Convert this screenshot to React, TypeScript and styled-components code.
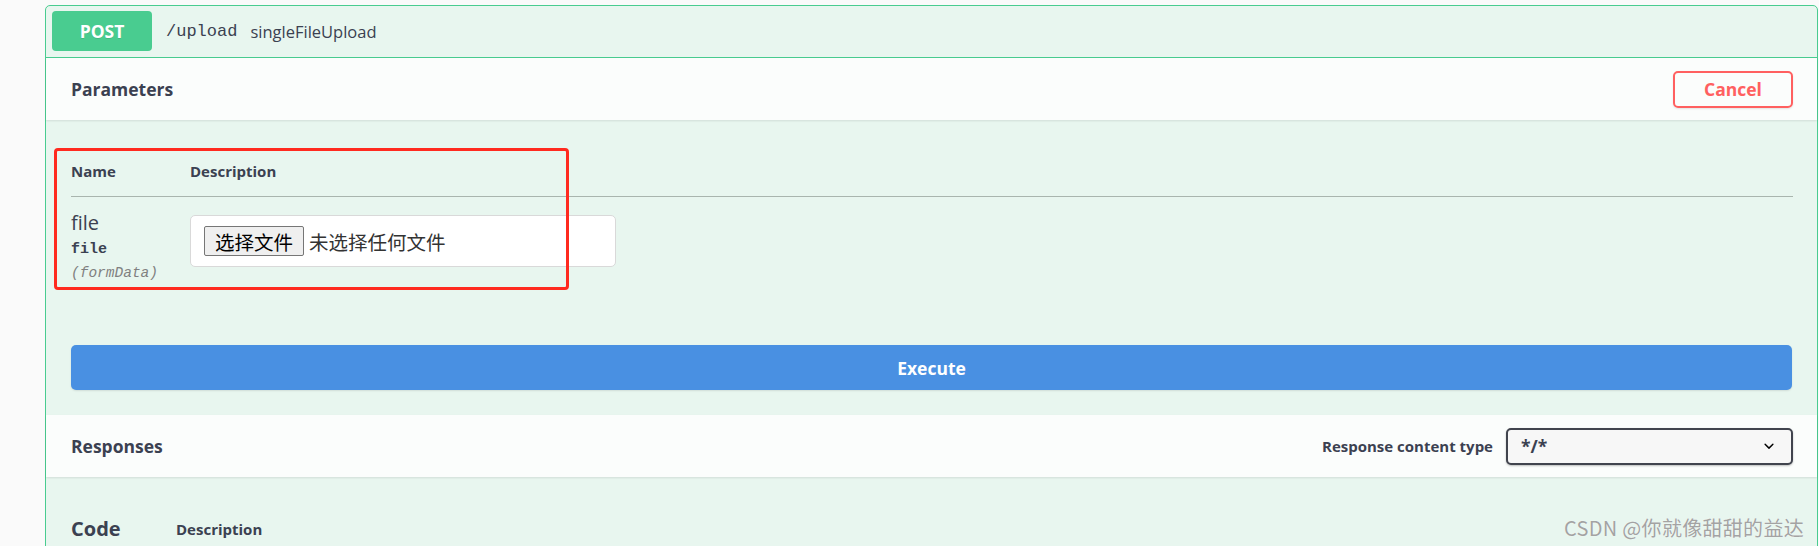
import React from "react";
import styled, { createGlobalStyle } from "styled-components";

const GlobalStyle = createGlobalStyle`
  html, body { margin: 0; padding: 0; }
  body {
    background: #fafafa;
    font-family: "Open Sans", "Noto Sans CJK SC", sans-serif;
    color: #3b4151;
    overflow: hidden;
  }
`;

const Page = styled.div`
  padding: 5px 1px 0 45px;
  height: 541px;
  overflow: hidden;
  position: relative;
`;

const OpBlock = styled.div`
  border: 1px solid #49cc90;
  border-radius: 5px;
  background: #e8f6ef;
  min-height: 700px;
`;

const Summary = styled.div`
  display: flex;
  align-items: center;
  padding: 5px 6px 6px 6px;
  border-bottom: 1px solid #49cc90;
`;

const Method = styled.span`
  width: 100px;
  height: 40px;
  display: flex;
  align-items: center;
  justify-content: center;
  background: #49cc90;
  color: #fff;
  border-radius: 4px;
  font-size: 17.5px;
  font-weight: 700;
  text-shadow: 0 1px 0 rgba(0, 0, 0, 0.1);
`;

const Path = styled.span`
  font-family: "Liberation Mono", monospace;
  font-size: 17px;
  color: #3b4151;
  margin-left: 14px;
`;

const OpDesc = styled.span`
  font-size: 16.5px;
  color: #3b4151;
  margin-left: 13px;
`;

const SectionHeader = styled.div`
  display: flex;
  align-items: center;
  justify-content: space-between;
  min-height: 62px;
  box-sizing: border-box;
  padding: 0 24px 0 25px;
  background: rgba(255, 255, 255, 0.8);
  box-shadow: 0 1px 2px rgba(0, 0, 0, 0.1);
`;

const SectionTitle = styled.h4`
  margin: 0;
  font-size: 17.5px;
  font-weight: 700;
  color: #3b4151;
`;

const CancelButton = styled.button`
  width: 120px;
  height: 37px;
  background: transparent;
  border: 2px solid #ff6060;
  border-radius: 5px;
  color: #ff6060;
  font-family: "Open Sans", sans-serif;
  font-size: 17.5px;
  font-weight: 700;
  padding: 0;
  box-shadow: 0 1px 2px rgba(0, 0, 0, 0.1);
`;

const Body = styled.div`
  position: relative;
  padding: 27px 24px 0 25px;
`;

const HeadRow = styled.div`
  display: grid;
  grid-template-columns: 119px 1fr;
  padding: 14px 0 15px;
  border-bottom: 1px solid #a9b5ae;
`;

const HeadCell = styled.span<{ $large?: boolean }>`
  font-size: ${(p) => (p.$large ? "20px" : "15px")};
  line-height: 20px;
  font-weight: 700;
  color: #3b4151;
`;

const ParamRow = styled.div`
  display: grid;
  grid-template-columns: 119px 1fr;
  padding: 18px 0 8px;
`;

const NameCol = styled.div`
  display: flex;
  flex-direction: column;
`;

const ParamName = styled.div`
  font-size: 20px;
  line-height: 24px;
  margin-top: -4px;
  color: #3b4151;
`;

const ParamType = styled.div`
  font-family: "Liberation Mono", monospace;
  font-size: 15px;
  font-weight: 700;
  line-height: 20px;
  padding: 5px 0 3px;
  color: #3b4151;
`;

const ParamIn = styled.div`
  font-family: "Liberation Mono", monospace;
  font-size: 14.5px;
  font-style: italic;
  line-height: 20px;
  color: #808080;
`;

const FileBox = styled.div`
  width: 426px;
  height: 52px;
  box-sizing: border-box;
  background: #fff;
  border: 1px solid #d9d9d9;
  border-radius: 5px;
  display: flex;
  align-items: center;
  padding: 0 13px;
`;

const FileButton = styled.span`
  height: 30px;
  width: 100px;
  box-sizing: border-box;
  display: flex;
  align-items: center;
  justify-content: center;
  background: #efefef;
  border: 1px solid #767676;
  border-radius: 2px;
  font-family: "Noto Sans CJK SC", sans-serif;
  font-size: 19.5px;
  color: #000;
`;

const FileText = styled.span`
  margin-left: 5px;
  font-family: "Noto Sans CJK SC", sans-serif;
  font-size: 19.5px;
  color: #333;
`;

const Highlight = styled.div`
  position: absolute;
  left: 8px;
  top: 28px;
  width: 515px;
  height: 142px;
  box-sizing: border-box;
  border: 3px solid #ff2a1f;
  border-radius: 4px;
  pointer-events: none;
`;

const ExecuteWrap = styled.div`
  padding: 54px 25px 25px 25px;
`;

const ExecuteButton = styled.button`
  display: block;
  width: 100%;
  height: 45px;
  border: none;
  border-radius: 5px;
  background: #4990e2;
  color: #fff;
  font-family: "Open Sans", sans-serif;
  font-size: 17.5px;
  font-weight: 700;
  box-shadow: 0 1px 2px rgba(0, 0, 0, 0.1);
`;

const RightGroup = styled.div`
  display: flex;
  align-items: center;
  gap: 13px;
`;

const Label = styled.span`
  font-size: 15px;
  font-weight: 700;
  color: #3b4151;
`;

const Select = styled.div`
  width: 287px;
  height: 37px;
  box-sizing: border-box;
  border: 2px solid #41444e;
  border-radius: 5px;
  background: #f7f7f7;
  box-shadow: 0 1px 2px 0 rgba(0, 0, 0, 0.25);
  display: flex;
  align-items: center;
  justify-content: space-between;
  padding: 0 12px 0 13px;
  font-size: 17.5px;
  font-weight: 700;
  color: #3b4151;
`;

const RespBody = styled.div`
  padding: 25px 24px 0 25px;
`;

const RespHead = styled.div`
  display: grid;
  grid-template-columns: 105px 1fr;
  align-items: center;
  padding: 17px 0;
`;

const Watermark = styled.div`
  position: absolute;
  right: 15px;
  top: 515px;
  font-family: "Noto Sans CJK SC", sans-serif;
  font-size: 20px;
  line-height: 26px;
  color: #a3a3a3;
  text-shadow: 0 0 1px #fff;
  letter-spacing: 0.3px;
`;

const Chevron = () => (
  <svg width="20" height="20" viewBox="0 0 20 20">
    <path
      d="M13.418 7.859a.695.695 0 01.978 0 .68.68 0 010 .969l-3.908 3.83a.697.697 0 01-.979 0l-3.908-3.83a.68.68 0 010-.969.695.695 0 01.978 0L10 11l3.418-3.141z"
      fill="#000"
    />
  </svg>
);

export default function App() {
  return (
    <>
      <GlobalStyle />
      <Page>
        <OpBlock>
          <Summary>
            <Method>POST</Method>
            <Path>/upload</Path>
            <OpDesc>singleFileUpload</OpDesc>
          </Summary>

          <SectionHeader>
            <SectionTitle>Parameters</SectionTitle>
            <CancelButton>Cancel</CancelButton>
          </SectionHeader>

          <Body>
            <HeadRow>
              <HeadCell>Name</HeadCell>
              <HeadCell>Description</HeadCell>
            </HeadRow>
            <ParamRow>
              <NameCol>
                <ParamName>file</ParamName>
                <ParamType>file</ParamType>
                <ParamIn>(formData)</ParamIn>
              </NameCol>
              <div>
                <FileBox>
                  <FileButton>选择文件</FileButton>
                  <FileText>未选择任何文件</FileText>
                </FileBox>
              </div>
            </ParamRow>
            <Highlight />
          </Body>

          <ExecuteWrap>
            <ExecuteButton>Execute</ExecuteButton>
          </ExecuteWrap>

          <SectionHeader>
            <SectionTitle>Responses</SectionTitle>
            <RightGroup>
              <Label>Response content type</Label>
              <Select>
                <span>*/*</span>
                <Chevron />
              </Select>
            </RightGroup>
          </SectionHeader>

          <RespBody>
            <RespHead>
              <HeadCell $large>Code</HeadCell>
              <HeadCell>Description</HeadCell>
            </RespHead>
          </RespBody>
        </OpBlock>
        <Watermark>CSDN @你就像甜甜的益达</Watermark>
      </Page>
    </>
  );
}
